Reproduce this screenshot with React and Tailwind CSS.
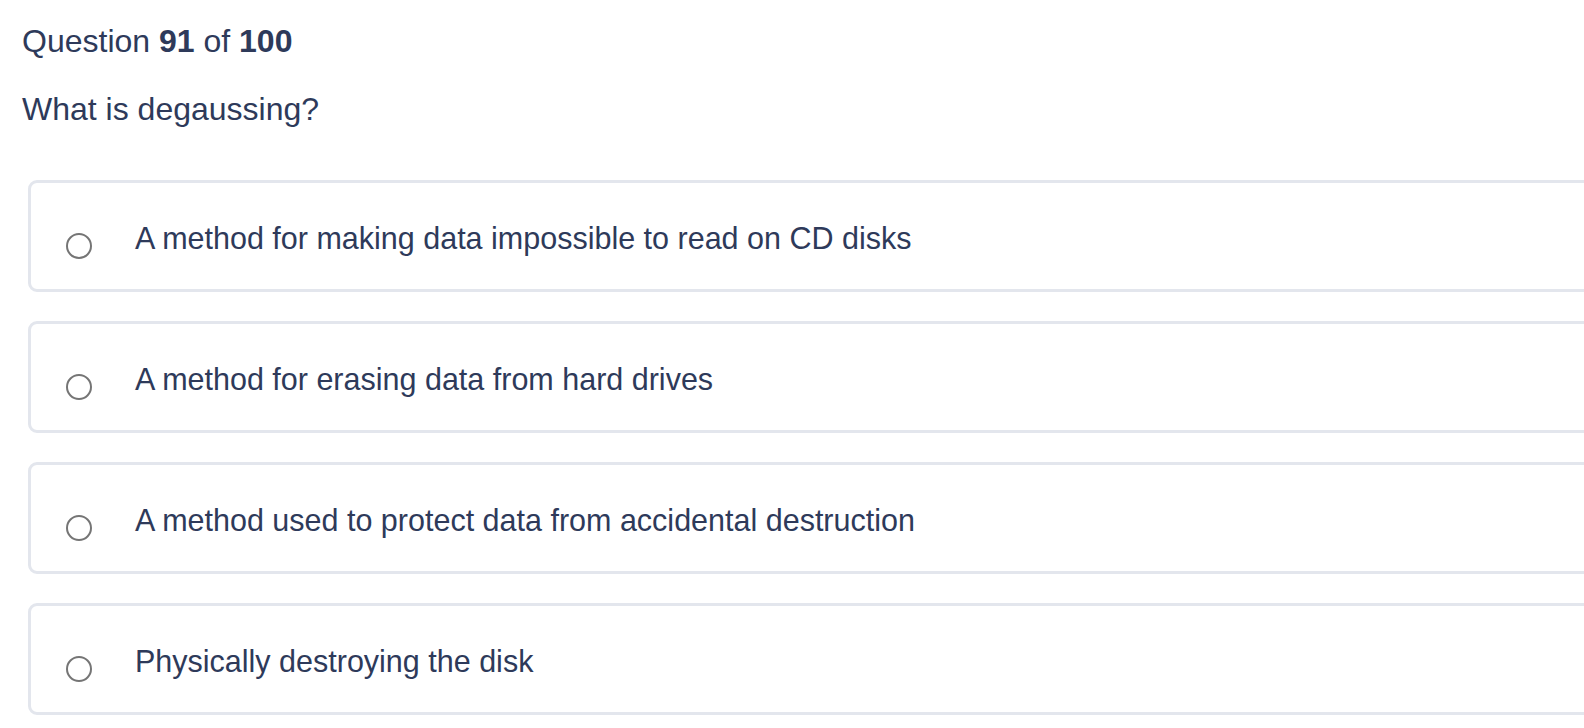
import React from 'react';

const options = [
    'A method for making data impossible to read on CD disks',
    'A method for erasing data from hard drives',
    'A method used to protect data from accidental destruction',
    'Physically destroying the disk',
];

const OptionCard = ({ text }) => (
    <label className="flex items-center h-[112px] w-[1600px] border-[3px] border-[#e3e6ed] rounded-[9px] bg-white cursor-pointer">
        <span className="ml-[35px] w-[26px] h-[26px] rounded-full border-2 border-[#757575] mt-[19px] shrink-0"></span>
        <span className="ml-[43px] mt-[3px] text-[30.5px] leading-[36px] text-[#2e3a5a]">{text}</span>
    </label>
);

export default function App() {
    return (
        <div className="w-[1584px] h-[728px] overflow-hidden bg-white" style={{ fontFamily: '"Liberation Sans", Arial, sans-serif' }}>
            <div className="pl-[22px] pt-[23px] text-[#2e3a5a]">
                <div className="text-[32px] leading-[36px]">
                    Question <span className="font-bold">91</span> of <span className="font-bold">100</span>
                </div>
                <div className="mt-[32px] text-[32px] leading-[36px]">What is degaussing?</div>
            </div>
            <div className="pl-[28px] mt-[53px] flex flex-col gap-[29px]">
                {options.map((o) => (
                    <OptionCard key={o} text={o} />
                ))}
            </div>
        </div>
    );
}
